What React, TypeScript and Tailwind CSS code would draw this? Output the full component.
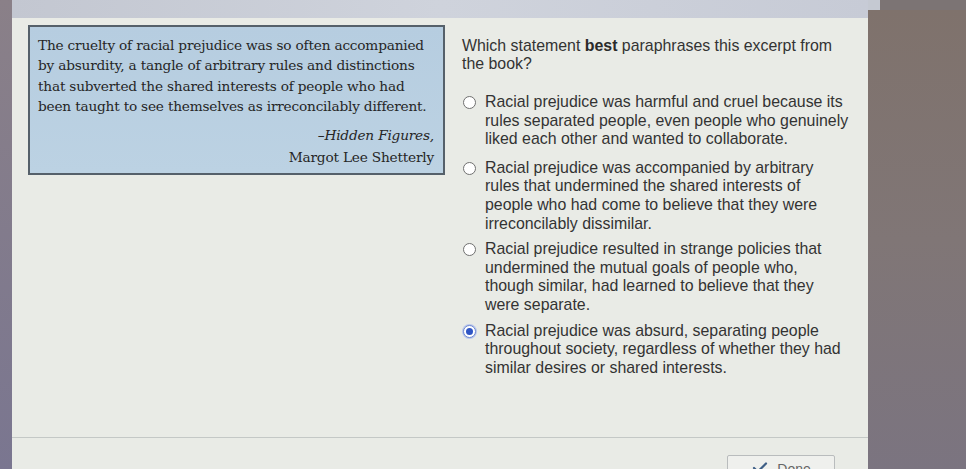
import { Check } from 'lucide-react';

const options = [
  {
    lines: [
      'Racial prejudice was harmful and cruel because its',
      'rules separated people, even people who genuinely',
      'liked each other and wanted to collaborate.',
    ],
    checked: false,
  },
  {
    lines: [
      'Racial prejudice was accompanied by arbitrary',
      'rules that undermined the shared interests of',
      'people who had come to believe that they were',
      'irreconcilably dissimilar.',
    ],
    checked: false,
  },
  {
    lines: [
      'Racial prejudice resulted in strange policies that',
      'undermined the mutual goals of people who,',
      'though similar, had learned to believe that they',
      'were separate.',
    ],
    checked: false,
  },
  {
    lines: [
      'Racial prejudice was absurd, separating people',
      'throughout society, regardless of whether they had',
      'similar desires or shared interests.',
    ],
    checked: true,
  },
];

const quote = [
  'The cruelty of racial prejudice was so often accompanied',
  'by absurdity, a tangle of arbitrary rules and distinctions',
  'that subverted the shared interests of people who had',
  'been taught to see themselves as irreconcilably different.',
];

const Radio = ({ checked }: { checked: boolean }) => (
  <span
    className={`mt-[3px] flex h-[13px] w-[13px] shrink-0 items-center justify-center rounded-full border bg-white ${
      checked ? 'border-[#6f88cf] ring-1 ring-[#b9c7ec]' : 'border-[#707070]'
    }`}
  >
    {checked && <span className="h-[7px] w-[7px] rounded-full bg-[#2f55c4]" />}
  </span>
);

export default function App() {
  return (
    <div className="flex h-[469px] w-[966px] overflow-hidden bg-[#7c7474]">
      {/* left bezel */}
      <div className="w-[12px] shrink-0 bg-gradient-to-b from-[#8a8088] to-[#7a7690]" />

      {/* screen */}
      <div className="flex w-[856px] shrink-0 flex-col bg-[#e9ebe6]">
        <div className="h-[18px] bg-gradient-to-r from-[#c3c7d1] via-[#cfd3dc] to-[#c7cbd6]" />

        <div className="flex h-[419px] gap-[17px] pl-[16px] pt-[7px]">
          {/* excerpt */}
          <div className="self-start w-[417px] shrink-0 whitespace-nowrap border-2 border-[#55606a] bg-gradient-to-b from-[#b6cde0] to-[#bcd2e3] pb-[5px] pl-[8px] pr-[9px] pt-[8px] font-['DejaVu_Serif',serif] text-[13.7px] leading-[20.3px] tracking-[-0.2px] text-[#262626]">
            <p>
              {quote.map((l, i) => (
                <span key={i} className="block">
                  {l}
                </span>
              ))}
            </p>
            <p className="mt-[9px] text-right italic">–Hidden Figures,</p>
            <p className="mt-[2px] text-right">Margot Lee Shetterly</p>
          </div>

          {/* question */}
          <div className="w-[400px] whitespace-nowrap pt-[12px] font-['Liberation_Sans',Arial,sans-serif] text-[15.9px] leading-[18px] text-[#333333]">
            <p>
              Which statement <b className="text-[#2a2a2a]">best</b> paraphrases this excerpt from
              <br />
              the book?
            </p>

            <div className="mt-[20px] flex flex-col gap-[7px]">
              {options.map((o, i) => (
                <label key={i} className={`flex gap-[9px] pl-[1px] ${i === 1 ? 'mt-[3px]' : ''}`}>
                  <Radio checked={o.checked} />
                  <span className="leading-[18.6px]">
                    {o.lines.map((l, j) => (
                      <span key={j} className="block">
                        {l}
                      </span>
                    ))}
                  </span>
                </label>
              ))}
            </div>
          </div>
        </div>

        {/* footer */}
        <div className="flex h-[32px] justify-end border-t border-[#c4c8c6] pr-[33px] pt-[17px]">
          <button className="flex h-[24px] w-[108px] items-start justify-center gap-[8px] rounded-[2px] border border-[#b9bcbd] bg-[#eff0ed] pt-[3px] font-['Liberation_Sans',Arial,sans-serif] text-[14px] text-[#666]">
            <Check size={18} strokeWidth={3} className="text-[#3f5f86]" />
            Done
          </button>
        </div>
      </div>

      {/* right bezel */}
      <div className="flex flex-1 flex-col">
        <div className="h-[10px] w-[12px] bg-[#c5c9d2]" />
        <div className="flex-1 bg-gradient-to-b from-[#7f726c] via-[#807676] to-[#7b7480]" />
      </div>
    </div>
  );
}
